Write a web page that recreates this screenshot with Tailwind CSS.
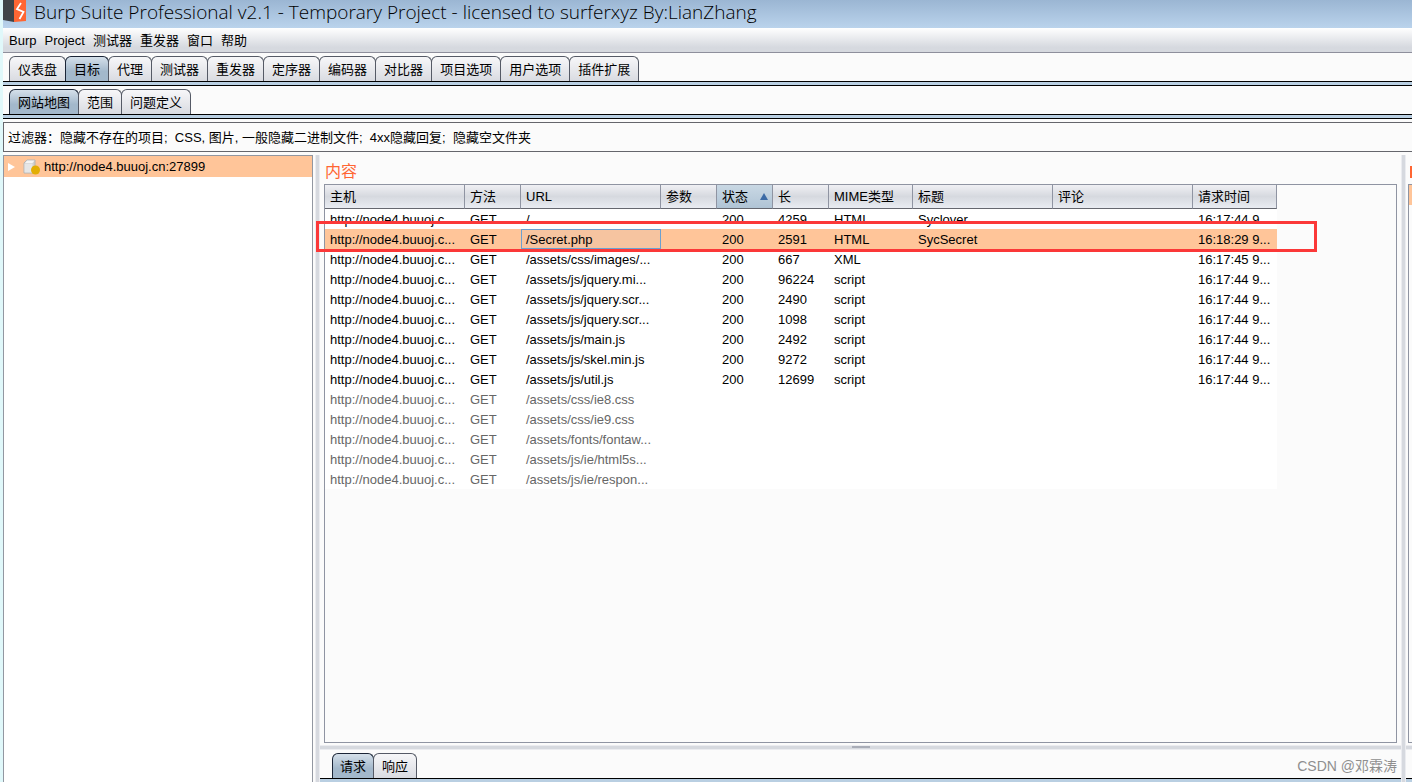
<!DOCTYPE html>
<html lang="zh-CN">
<head>
  <meta charset="UTF-8">
  <meta name="viewport" content="width=device-width, initial-scale=1.0">
  <title>Burp Suite Professional v2.1</title>
  <script src="https://cdn.jsdelivr.net/npm/@tailwindcss/browser@4"></script>
</head>
<body class="h-screen overflow-hidden flex flex-col bg-[#fbfbfb] border-l-3 border-[#e0f8fa] text-black text-[13px] leading-5 font-['Liberation_Sans','Noto_Sans_CJK_SC',sans-serif]">

  <!-- Title bar -->
  <header class="shrink-0 h-7 flex items-center bg-linear-to-b from-[#9bb6d3] to-[#bad3ec] overflow-hidden">
    <svg class="w-6 h-7 shrink-0" viewBox="0 0 24 28">
      <path d="M0 0H11V22L0 20Z" fill="#414448"/>
      <path d="M11 0H23V21L11 22Z" fill="#ff6633"/>
      <path d="M18 3L14 9L20.500 12L16.500 19" fill="none" stroke="#fff" stroke-width="1.800"/>
    </svg>
    <h1 class="pl-[7px] pb-1 text-[19px] leading-6 font-light whitespace-nowrap font-['Open_Sans',sans-serif]">Burp Suite Professional v2.1 - Temporary Project - licensed to surferxyz By:LianZhang</h1>
  </header>

  <!-- Menu bar -->
  <nav class="shrink-0 h-[25px] flex items-center gap-2 pl-[6px] pt-[2px] border-b border-[#8e8f9c] bg-linear-to-b from-white to-[#d6d9df] to-80%">
    <button>Burp</button>
    <button>Project</button>
    <button>测试器</button>
    <button>重发器</button>
    <button>窗口</button>
    <button>帮助</button>
  </nav>

  <!-- Main tabs -->
  <div class="shrink-0 flex pl-[7px] pt-[3px]" role="tablist">
    <button role="tab" class="h-[25px] px-2 pt-[2px] -ml-px border border-b-0 border-[#555a66] rounded-t-md bg-linear-to-b from-[#f7f7f9] to-[#d9dbe1]">仪表盘</button>
    <button role="tab" aria-selected="true" class="h-[25px] px-2 pt-[2px] -ml-px border border-b-0 border-[#1a2436] rounded-t-md bg-linear-to-b from-[#d5e0ea] to-[#a3b8cb] to-60%">目标</button>
    <button role="tab" class="h-[25px] px-2 pt-[2px] -ml-px border border-b-0 border-[#555a66] rounded-t-md bg-linear-to-b from-[#f7f7f9] to-[#d9dbe1]">代理</button>
    <button role="tab" class="h-[25px] px-2 pt-[2px] -ml-px border border-b-0 border-[#555a66] rounded-t-md bg-linear-to-b from-[#f7f7f9] to-[#d9dbe1]">测试器</button>
    <button role="tab" class="h-[25px] px-2 pt-[2px] -ml-px border border-b-0 border-[#555a66] rounded-t-md bg-linear-to-b from-[#f7f7f9] to-[#d9dbe1]">重发器</button>
    <button role="tab" class="h-[25px] px-2 pt-[2px] -ml-px border border-b-0 border-[#555a66] rounded-t-md bg-linear-to-b from-[#f7f7f9] to-[#d9dbe1]">定序器</button>
    <button role="tab" class="h-[25px] px-2 pt-[2px] -ml-px border border-b-0 border-[#555a66] rounded-t-md bg-linear-to-b from-[#f7f7f9] to-[#d9dbe1]">编码器</button>
    <button role="tab" class="h-[25px] px-2 pt-[2px] -ml-px border border-b-0 border-[#555a66] rounded-t-md bg-linear-to-b from-[#f7f7f9] to-[#d9dbe1]">对比器</button>
    <button role="tab" class="h-[25px] px-2 pt-[2px] -ml-px border border-b-0 border-[#555a66] rounded-t-md bg-linear-to-b from-[#f7f7f9] to-[#d9dbe1]">项目选项</button>
    <button role="tab" class="h-[25px] px-2 pt-[2px] -ml-px border border-b-0 border-[#555a66] rounded-t-md bg-linear-to-b from-[#f7f7f9] to-[#d9dbe1]">用户选项</button>
    <button role="tab" class="h-[25px] px-2 pt-[2px] -ml-px border border-b-0 border-[#555a66] rounded-t-md bg-linear-to-b from-[#f7f7f9] to-[#d9dbe1]">插件扩展</button>
  </div>
  <div class="shrink-0 h-[5px] border-y border-black bg-[#b9cfe2]"></div>

  <!-- Target tabs -->
  <div class="shrink-0 flex pl-[7px] pt-[3px]" role="tablist">
    <button role="tab" aria-selected="true" class="h-[25px] px-2 pt-[2px] -ml-px border border-b-0 border-[#1a2436] rounded-t-md bg-linear-to-b from-[#d5e0ea] to-[#a3b8cb] to-60%">网站地图</button>
    <button role="tab" class="h-[25px] px-2 pt-[2px] -ml-px border border-b-0 border-[#555a66] rounded-t-md bg-linear-to-b from-[#f7f7f9] to-[#d9dbe1]">范围</button>
    <button role="tab" class="h-[25px] px-2 pt-[2px] -ml-px border border-b-0 border-[#555a66] rounded-t-md bg-linear-to-b from-[#f7f7f9] to-[#d9dbe1]">问题定义</button>
  </div>
  <div class="shrink-0 h-[5px] border-y border-black bg-[#b9cfe2]"></div>

  <!-- Filter -->
  <button class="shrink-0 mt-[3px] h-[30px] pl-1 pt-[2px] border border-r-0 border-[#65666c] text-left whitespace-pre">过滤器：隐藏不存在的项目;  CSS, 图片, 一般隐藏二进制文件;  4xx隐藏回复;  隐藏空文件夹</button>

  <main class="flex-1 min-h-0 flex pt-[3px]">
    <!-- Site map tree -->
    <aside class="shrink-0 w-[310px] border border-b-0 border-[#9297a1] bg-white">
      <div class="flex items-center h-[21px] pt-px pl-1 bg-[#ffc599]">
        <svg class="w-2 h-2" viewBox="0 0 8 8"><path d="M0 0L7 4L0 8Z" fill="#fff"/></svg>
        <svg class="w-[17px] h-4 ml-[7px]" viewBox="0 0 17 16">
          <path d="M1 4L4 1H12V11L10 14H1Z" fill="#d0d0d0" stroke="#b4b4b4"/>
          <path d="M1.500 4.500H9.500V13.500H1.500Z" fill="#e6e6e6"/>
          <path d="M4 1.500H11.500L9.500 4H2Z" fill="#f4f4f4"/>
          <circle cx="12.500" cy="11" r="4.500" fill="#e2ae05"/>
        </svg>
        <span class="pl-1">http://node4.buuoj.cn:27899</span>
      </div>
    </aside>
    <div class="shrink-0 w-[5px] ml-[2px] border-x border-[#ebecf0] bg-[#d6d9df]"></div>

    <!-- Contents -->
    <section class="relative flex-1 min-w-0 flex flex-col">
      <h2 class="pl-[5px] pt-[5px] h-[29px] text-[16px] leading-6 text-[#ff6633]">内容</h2>
      <div class="flex-1 min-h-0 ml-1 mr-1 border border-[#8f94a2] overflow-hidden">
        <table class="table-fixed w-[952px] border-separate border-spacing-0 text-left">
          <colgroup>
            <col class="w-[140px]"><col class="w-[56px]"><col class="w-[140px]"><col class="w-[56px]"><col class="w-[56px]">
            <col class="w-[56px]"><col class="w-[84px]"><col class="w-[140px]"><col class="w-[140px]"><col class="w-[84px]">
          </colgroup>
          <thead>
            <tr id="head"></tr>
          </thead>
          <tbody id="rows" class="bg-white"></tbody>
        </table>
      </div>
      <div class="shrink-0 mt-[2px] h-[5px] flex justify-center border-y border-[#ebecf0] bg-[#d6d9df]">
        <span class="w-[18px] h-[2px] bg-[#a9adb8]"></span>
      </div>
      <div class="shrink-0 flex pl-[13px] pt-[3px]" role="tablist">
        <button role="tab" aria-selected="true" class="h-[25px] px-[7px] pt-[2px] -ml-px border border-b-0 border-[#1a2436] rounded-t-md bg-linear-to-b from-[#d5e0ea] to-[#a3b8cb] to-60%">请求</button>
        <button role="tab" class="h-[25px] px-2 pt-[2px] -ml-px border border-b-0 border-[#555a66] rounded-t-md bg-linear-to-b from-[#f7f7f9] to-[#d9dbe1]">响应</button>
      </div>
      <div class="shrink-0 h-1 border-t border-black bg-[#b9cfe2]"></div>

      <!-- Highlight box -->
      <div class="absolute -left-1 top-[66px] w-[1001px] h-[31px] border-3 border-[#fb3838]"></div>
      <p class="absolute right-1 bottom-1 text-[14px] leading-6 text-[#8f8f8f]">CSDN @邓霖涛</p>
    </section>
    <div class="shrink-0 w-[5px] border-x border-[#ebecf0] bg-[#d6d9df]"></div>

    <!-- Issues pane -->
    <section class="shrink-0 w-[6px] flex flex-col overflow-hidden">
      <div class="h-[29px] pl-[4px] pt-[11px]"><div class="h-3 bg-[#ff6633]"></div></div>
      <div class="flex-1 ml-[2px] border border-r-0 border-[#8f94a2]"><div class="h-5 bg-[#ffc599]"></div></div>
      <div class="shrink-0 mt-[2px] h-[5px] border-y border-[#ebecf0] bg-[#d6d9df]"></div>
      <div class="shrink-0 h-7"></div>
      <div class="shrink-0 h-1 border-t border-black bg-[#b9cfe2]"></div>
    </section>
  </main>

  <script>
    const columns = ['主机', '方法', 'URL', '参数', '状态', '长', 'MIME类型', '标题', '评论', '请求时间'];
    const host = 'http://node4.buuoj.c...';
    const rows = [
      ['/', '200', '4259', 'HTML', 'Syclover', '16:17:44 9...'],
      ['/Secret.php', '200', '2591', 'HTML', 'SycSecret', '16:18:29 9...'],
      ['/assets/css/images/...', '200', '667', 'XML', '', '16:17:45 9...'],
      ['/assets/js/jquery.mi...', '200', '96224', 'script', '', '16:17:44 9...'],
      ['/assets/js/jquery.scr...', '200', '2490', 'script', '', '16:17:44 9...'],
      ['/assets/js/jquery.scr...', '200', '1098', 'script', '', '16:17:44 9...'],
      ['/assets/js/main.js', '200', '2492', 'script', '', '16:17:44 9...'],
      ['/assets/js/skel.min.js', '200', '9272', 'script', '', '16:17:44 9...'],
      ['/assets/js/util.js', '200', '12699', 'script', '', '16:17:44 9...'],
      ['/assets/css/ie8.css', '', '', '', '', ''],
      ['/assets/css/ie9.css', '', '', '', '', ''],
      ['/assets/fonts/fontaw...', '', '', '', '', ''],
      ['/assets/js/ie/html5s...', '', '', '', '', ''],
      ['/assets/js/ie/respon...', '', '', '', '', '']
    ];

    const head = document.getElementById('head');
    columns.forEach((name) => {
      const th = document.createElement('th');
      const sorted = name === '状态';
      th.className = 'h-6 p-0 pl-[5px] pr-1 font-normal border-r border-b border-r-[#8f94a2] border-b-[#65676f] bg-linear-to-b ' +
        (sorted ? 'from-[#c9d8e4] to-[#b0c4d5]' : 'from-[#f0f0f4] via-[#d6d9df] to-[#e9ecf2]');
      th.innerHTML = sorted
        ? `<div class="flex items-center justify-between">${name}<svg class="w-2 h-[7px]" viewBox="0 0 8 7"><path d="M4 0L8 7H0Z" fill="#3c6ba5"/></svg></div>`
        : name;
      head.appendChild(th);
    });

    const body = document.getElementById('rows');
    rows.forEach(([url, status, length, mime, title, time]) => {
      const selected = url === '/Secret.php';
      const tr = document.createElement('tr');
      tr.className = selected ? 'bg-[#ffc599]' : status ? '' : 'text-[#666666]';
      [host, 'GET', url, '', status, length, mime, title, '', time].forEach((text) => {
        const td = document.createElement('td');
        td.className = 'h-5 p-0 pl-[5px] pt-px leading-[19px] whitespace-nowrap';
        if (selected && text === url) {
          td.className += ' bg-[#f6c4a0] outline outline-[#6ba0d0] -outline-offset-1';
        }
        td.textContent = text;
        tr.appendChild(td);
      });
      body.appendChild(tr);
    });
  </script>
</body>
</html>
